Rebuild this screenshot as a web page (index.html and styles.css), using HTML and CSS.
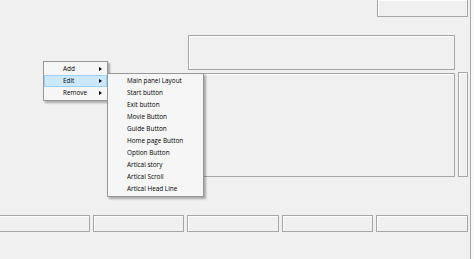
FILE: index.html
```html
<!DOCTYPE html>
<html lang="en">
<head>
    <meta charset="UTF-8">
    <meta name="viewport" content="width=device-width, initial-scale=1.0">
    <title>Panel Editor</title>
    <link rel="stylesheet" href="styles.css">
</head>
<body>
    <div class="window">
        <div class="top-row">
            <div class="panel top-box"></div>
        </div>
        <div class="panel header-box"></div>
        <div class="mid-row">
            <div class="panel big-box"></div>
            <div class="panel side-box"></div>
        </div>
        <div class="button-row">
            <div class="panel btn-box"></div>
            <div class="panel btn-box"></div>
            <div class="panel btn-box"></div>
            <div class="panel btn-box"></div>
            <div class="panel btn-box"></div>
        </div>

        <div class="menu main-menu">
            <div class="menu-item">Add<span class="arrow"></span></div>
            <div class="menu-item active">Edit<span class="arrow"></span></div>
            <div class="menu-item">Remove<span class="arrow"></span></div>
        </div>

        <div class="menu sub-menu">
            <div class="menu-item">Main panel Layout</div>
            <div class="menu-item">Start button</div>
            <div class="menu-item">Exit button</div>
            <div class="menu-item">Movie Button</div>
            <div class="menu-item">Guide Button</div>
            <div class="menu-item">Home page Button</div>
            <div class="menu-item">Option Button</div>
            <div class="menu-item">Artical story</div>
            <div class="menu-item">Artical Scroll</div>
            <div class="menu-item">Artical Head Line</div>
        </div>
    </div>
</body>
</html>
```

FILE: styles.css
```css
body {
    margin: 0;
    background-color: #f9f9f9;
    font-family: "Open Sans", "Noto Sans", sans-serif;
}
.window {
    position: relative;
    width: 470px;
    height: 259px;
    background-color: #f0f0f0;
    border-right: 1px solid #a8a8a8;
    overflow: hidden;
}
.panel {
    box-sizing: border-box;
    border: 1px solid #a6a6a6;
    box-shadow: inset 1px 1px 0 #fdfdfd;
}
.top-row {
    padding-left: 377px;
}
.top-box {
    width: 91px;
    height: 17px;
    border-top: none;
}
.header-box {
    margin-top: 18px;
    margin-left: 188px;
    width: 267px;
    height: 35px;
}
.mid-row {
    display: flex;
    gap: 3px;
    margin-top: 3px;
    margin-left: 188px;
}
.big-box {
    width: 267px;
    height: 104px;
}
.side-box {
    width: 10px;
    height: 105px;
    margin-top: -1px;
}
.button-row {
    display: flex;
    gap: 3px;
    margin-top: 38px;
    margin-left: -2px;
    width: 470px;
}
.btn-box {
    flex: 1;
    height: 17px;
}

/* context menus */
.menu {
    position: absolute;
    box-sizing: border-box;
    padding: 1px 0;
    background-color: #f6f6f6;
    border: 1px solid #979797;
    box-shadow: 2px 2px 2px rgba(0, 0, 0, 0.3);
    font-size: 6.4px;
    color: #000;
}
.main-menu {
    left: 43px;
    top: 61px;
    width: 65px;
}
.sub-menu {
    left: 107px;
    top: 73px;
    width: 97px;
}
.menu-item {
    position: relative;
    height: 12px;
    line-height: 12px;
    padding-left: 19px;
    white-space: nowrap;
}
.menu-item.active {
    background-color: #cce8ff;
    box-shadow: inset 0 0 0 1px #99d1ff;
}
.arrow {
    position: absolute;
    left: 55px;
    top: 4px;
    width: 0;
    height: 0;
    border-left: 3px solid #000;
    border-top: 2px solid transparent;
    border-bottom: 2px solid transparent;
}
```
